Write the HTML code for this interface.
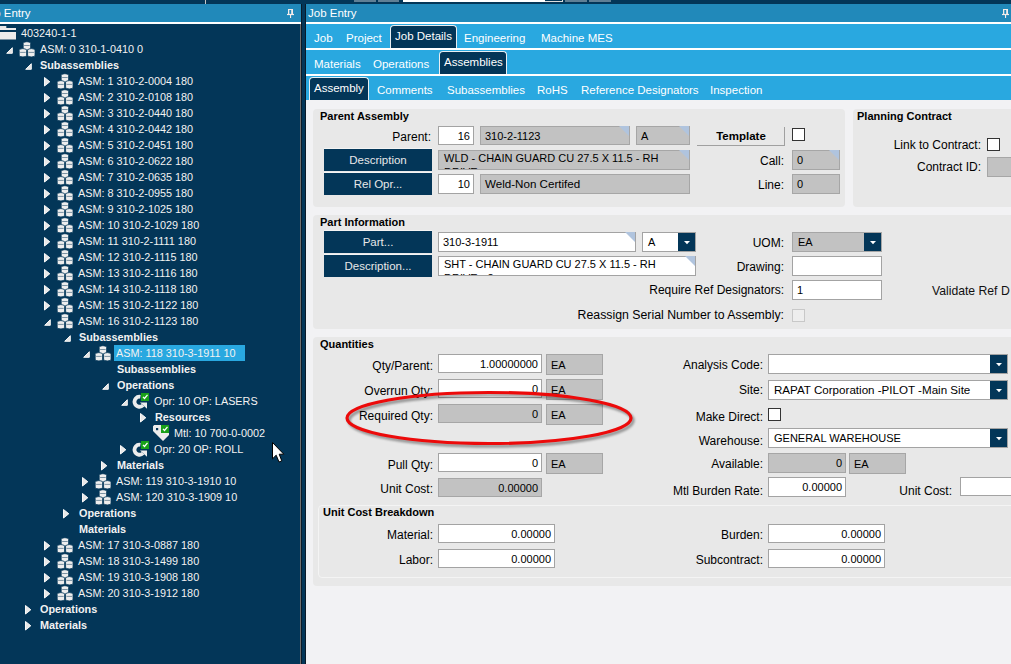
<!DOCTYPE html>
<html><head><meta charset="utf-8"><style>
html,body{margin:0;padding:0;width:1011px;height:664px;overflow:hidden;background:#033658;font-family:"Liberation Sans",sans-serif}
#r{position:relative;width:1011px;height:664px;overflow:hidden}
#r div,#r svg{position:absolute}
.t{white-space:nowrap}
</style></head><body><div id="r">
<div style="left:0px;top:0px;width:1011px;height:4px;background:#033658"></div>
<div style="left:205px;top:0px;width:1px;height:4px;background:#c8c8c8"></div>
<div style="left:354px;top:0px;width:22px;height:2px;background:#5f7f95"></div>
<div style="left:378px;top:0px;width:21px;height:2px;background:#5f7f95"></div>
<div style="left:403px;top:0px;width:142px;height:2px;background:#fff"></div>
<div style="left:545px;top:0px;width:18px;height:2px;background:#033658;border-bottom:1px solid #ddd;border-right:1px solid #ddd;box-sizing:border-box"></div>
<div style="left:565px;top:0px;width:22px;height:2px;background:#5f7f95"></div>
<div style="left:589px;top:0px;width:22px;height:2px;background:#5f7f95"></div>
<div style="left:0px;top:4px;width:301px;height:18px;background:#2189ba"></div>
<div style="left:0px;top:22px;width:301px;height:2px;background:#fff"></div>
<div style="left:0px;top:24px;width:300px;height:640px;background:#033658"></div>
<div style="left:300px;top:24px;width:1px;height:640px;background:#707070"></div>
<div class="t" style="left:-18px;top:4px;font-size:11.5px;line-height:18px;color:#fff;">Job Entry</div>
<svg style="left:287px;top:9px" width="8" height="10" viewBox="0 0 8 10"><path d="M1 0H6V5H4.2V1.1H2.3V5H1Z" fill="#f4ecea"/><rect x="0" y="4.9" width="7" height="1.2" fill="#f4ecea"/><rect x="3" y="6" width="1.1" height="3" fill="#f4ecea"/></svg>
<div style="left:301px;top:0px;width:5px;height:664px;background:#033658"></div>
<div style="left:301px;top:4px;width:1px;height:660px;background:#0a1a28"></div>
<div style="left:305px;top:4px;width:1px;height:660px;background:#0a1a28"></div>
<svg style="left:0px;top:26px" width="17" height="15" viewBox="0 0 17 15"><rect x="0" y="0" width="6.3" height="2" fill="#e6e6e6"/><rect x="0" y="2" width="16" height="2" fill="#ececec"/><rect x="0" y="6" width="16" height="7.5" fill="#ececec"/></svg>
<div class="t" style="left:21px;top:25px;font-size:10.85px;line-height:16px;color:#f2f2f2;">403240-1-1</div>
<svg style="left:6px;top:47px" width="7" height="7" viewBox="0 0 7 7"><path d="M6.3 0.7V6.3H0.7Z" fill="#e4e4e4" stroke="#f4f4f4" stroke-width="1"/></svg>
<svg style="left:19px;top:41px" width="16" height="16" viewBox="0 0 16 16"><path d="M4.2 2.5V7.300000000000001Q4.2 9.0 7.9 9.0Q11.600000000000001 9.0 11.600000000000001 7.300000000000001V2.5Q11.600000000000001 0.7 7.9 0.7Q4.2 0.7 4.2 2.5Z" fill="#eeeeee" stroke="#033658" stroke-width="0.8"/><rect x="5.1000000000000005" y="4.0" width="5.6" height="0.9" fill="#6f889a"/><path d="M0.19999999999999973 9.4V14.2Q0.19999999999999973 15.899999999999999 3.9 15.899999999999999Q7.6 15.899999999999999 7.6 14.2V9.4Q7.6 7.6 3.9 7.6Q0.19999999999999973 7.6 0.19999999999999973 9.4Z" fill="#eeeeee" stroke="#033658" stroke-width="0.8"/><rect x="1.1" y="10.9" width="5.6" height="0.9" fill="#6f889a"/><path d="M8.600000000000001 9.4V14.2Q8.600000000000001 15.899999999999999 12.3 15.899999999999999Q16.0 15.899999999999999 16.0 14.2V9.4Q16.0 7.6 12.3 7.6Q8.600000000000001 7.6 8.600000000000001 9.4Z" fill="#eeeeee" stroke="#033658" stroke-width="0.8"/><rect x="9.5" y="10.9" width="5.6" height="0.9" fill="#6f889a"/></svg>
<div class="t" style="left:40px;top:41px;font-size:10.85px;line-height:16px;color:#f2f2f2;">ASM: 0 310-1-0410 0</div>
<svg style="left:25px;top:63px" width="7" height="7" viewBox="0 0 7 7"><path d="M6.3 0.7V6.3H0.7Z" fill="#e4e4e4" stroke="#f4f4f4" stroke-width="1"/></svg>
<div class="t" style="left:40px;top:57px;font-size:10.85px;line-height:16px;color:#f2f2f2;font-weight:bold;">Subassemblies</div>
<svg style="left:44px;top:77px" width="7" height="10" viewBox="0 0 7 10"><path d="M0.5 0.5L5.8 4.75L0.5 9Z" fill="#e8e8e8" stroke="#f8f8f8" stroke-width="1"/></svg>
<svg style="left:57px;top:73px" width="16" height="16" viewBox="0 0 16 16"><path d="M4.2 2.5V7.300000000000001Q4.2 9.0 7.9 9.0Q11.600000000000001 9.0 11.600000000000001 7.300000000000001V2.5Q11.600000000000001 0.7 7.9 0.7Q4.2 0.7 4.2 2.5Z" fill="#eeeeee" stroke="#033658" stroke-width="0.8"/><rect x="5.1000000000000005" y="4.0" width="5.6" height="0.9" fill="#6f889a"/><path d="M0.19999999999999973 9.4V14.2Q0.19999999999999973 15.899999999999999 3.9 15.899999999999999Q7.6 15.899999999999999 7.6 14.2V9.4Q7.6 7.6 3.9 7.6Q0.19999999999999973 7.6 0.19999999999999973 9.4Z" fill="#eeeeee" stroke="#033658" stroke-width="0.8"/><rect x="1.1" y="10.9" width="5.6" height="0.9" fill="#6f889a"/><path d="M8.600000000000001 9.4V14.2Q8.600000000000001 15.899999999999999 12.3 15.899999999999999Q16.0 15.899999999999999 16.0 14.2V9.4Q16.0 7.6 12.3 7.6Q8.600000000000001 7.6 8.600000000000001 9.4Z" fill="#eeeeee" stroke="#033658" stroke-width="0.8"/><rect x="9.5" y="10.9" width="5.6" height="0.9" fill="#6f889a"/></svg>
<div class="t" style="left:78px;top:73px;font-size:10.85px;line-height:16px;color:#f2f2f2;">ASM: 1 310-2-0004 180</div>
<svg style="left:44px;top:93px" width="7" height="10" viewBox="0 0 7 10"><path d="M0.5 0.5L5.8 4.75L0.5 9Z" fill="#e8e8e8" stroke="#f8f8f8" stroke-width="1"/></svg>
<svg style="left:57px;top:89px" width="16" height="16" viewBox="0 0 16 16"><path d="M4.2 2.5V7.300000000000001Q4.2 9.0 7.9 9.0Q11.600000000000001 9.0 11.600000000000001 7.300000000000001V2.5Q11.600000000000001 0.7 7.9 0.7Q4.2 0.7 4.2 2.5Z" fill="#eeeeee" stroke="#033658" stroke-width="0.8"/><rect x="5.1000000000000005" y="4.0" width="5.6" height="0.9" fill="#6f889a"/><path d="M0.19999999999999973 9.4V14.2Q0.19999999999999973 15.899999999999999 3.9 15.899999999999999Q7.6 15.899999999999999 7.6 14.2V9.4Q7.6 7.6 3.9 7.6Q0.19999999999999973 7.6 0.19999999999999973 9.4Z" fill="#eeeeee" stroke="#033658" stroke-width="0.8"/><rect x="1.1" y="10.9" width="5.6" height="0.9" fill="#6f889a"/><path d="M8.600000000000001 9.4V14.2Q8.600000000000001 15.899999999999999 12.3 15.899999999999999Q16.0 15.899999999999999 16.0 14.2V9.4Q16.0 7.6 12.3 7.6Q8.600000000000001 7.6 8.600000000000001 9.4Z" fill="#eeeeee" stroke="#033658" stroke-width="0.8"/><rect x="9.5" y="10.9" width="5.6" height="0.9" fill="#6f889a"/></svg>
<div class="t" style="left:78px;top:89px;font-size:10.85px;line-height:16px;color:#f2f2f2;">ASM: 2 310-2-0108 180</div>
<svg style="left:44px;top:109px" width="7" height="10" viewBox="0 0 7 10"><path d="M0.5 0.5L5.8 4.75L0.5 9Z" fill="#e8e8e8" stroke="#f8f8f8" stroke-width="1"/></svg>
<svg style="left:57px;top:105px" width="16" height="16" viewBox="0 0 16 16"><path d="M4.2 2.5V7.300000000000001Q4.2 9.0 7.9 9.0Q11.600000000000001 9.0 11.600000000000001 7.300000000000001V2.5Q11.600000000000001 0.7 7.9 0.7Q4.2 0.7 4.2 2.5Z" fill="#eeeeee" stroke="#033658" stroke-width="0.8"/><rect x="5.1000000000000005" y="4.0" width="5.6" height="0.9" fill="#6f889a"/><path d="M0.19999999999999973 9.4V14.2Q0.19999999999999973 15.899999999999999 3.9 15.899999999999999Q7.6 15.899999999999999 7.6 14.2V9.4Q7.6 7.6 3.9 7.6Q0.19999999999999973 7.6 0.19999999999999973 9.4Z" fill="#eeeeee" stroke="#033658" stroke-width="0.8"/><rect x="1.1" y="10.9" width="5.6" height="0.9" fill="#6f889a"/><path d="M8.600000000000001 9.4V14.2Q8.600000000000001 15.899999999999999 12.3 15.899999999999999Q16.0 15.899999999999999 16.0 14.2V9.4Q16.0 7.6 12.3 7.6Q8.600000000000001 7.6 8.600000000000001 9.4Z" fill="#eeeeee" stroke="#033658" stroke-width="0.8"/><rect x="9.5" y="10.9" width="5.6" height="0.9" fill="#6f889a"/></svg>
<div class="t" style="left:78px;top:105px;font-size:10.85px;line-height:16px;color:#f2f2f2;">ASM: 3 310-2-0440 180</div>
<svg style="left:44px;top:125px" width="7" height="10" viewBox="0 0 7 10"><path d="M0.5 0.5L5.8 4.75L0.5 9Z" fill="#e8e8e8" stroke="#f8f8f8" stroke-width="1"/></svg>
<svg style="left:57px;top:121px" width="16" height="16" viewBox="0 0 16 16"><path d="M4.2 2.5V7.300000000000001Q4.2 9.0 7.9 9.0Q11.600000000000001 9.0 11.600000000000001 7.300000000000001V2.5Q11.600000000000001 0.7 7.9 0.7Q4.2 0.7 4.2 2.5Z" fill="#eeeeee" stroke="#033658" stroke-width="0.8"/><rect x="5.1000000000000005" y="4.0" width="5.6" height="0.9" fill="#6f889a"/><path d="M0.19999999999999973 9.4V14.2Q0.19999999999999973 15.899999999999999 3.9 15.899999999999999Q7.6 15.899999999999999 7.6 14.2V9.4Q7.6 7.6 3.9 7.6Q0.19999999999999973 7.6 0.19999999999999973 9.4Z" fill="#eeeeee" stroke="#033658" stroke-width="0.8"/><rect x="1.1" y="10.9" width="5.6" height="0.9" fill="#6f889a"/><path d="M8.600000000000001 9.4V14.2Q8.600000000000001 15.899999999999999 12.3 15.899999999999999Q16.0 15.899999999999999 16.0 14.2V9.4Q16.0 7.6 12.3 7.6Q8.600000000000001 7.6 8.600000000000001 9.4Z" fill="#eeeeee" stroke="#033658" stroke-width="0.8"/><rect x="9.5" y="10.9" width="5.6" height="0.9" fill="#6f889a"/></svg>
<div class="t" style="left:78px;top:121px;font-size:10.85px;line-height:16px;color:#f2f2f2;">ASM: 4 310-2-0442 180</div>
<svg style="left:44px;top:141px" width="7" height="10" viewBox="0 0 7 10"><path d="M0.5 0.5L5.8 4.75L0.5 9Z" fill="#e8e8e8" stroke="#f8f8f8" stroke-width="1"/></svg>
<svg style="left:57px;top:137px" width="16" height="16" viewBox="0 0 16 16"><path d="M4.2 2.5V7.300000000000001Q4.2 9.0 7.9 9.0Q11.600000000000001 9.0 11.600000000000001 7.300000000000001V2.5Q11.600000000000001 0.7 7.9 0.7Q4.2 0.7 4.2 2.5Z" fill="#eeeeee" stroke="#033658" stroke-width="0.8"/><rect x="5.1000000000000005" y="4.0" width="5.6" height="0.9" fill="#6f889a"/><path d="M0.19999999999999973 9.4V14.2Q0.19999999999999973 15.899999999999999 3.9 15.899999999999999Q7.6 15.899999999999999 7.6 14.2V9.4Q7.6 7.6 3.9 7.6Q0.19999999999999973 7.6 0.19999999999999973 9.4Z" fill="#eeeeee" stroke="#033658" stroke-width="0.8"/><rect x="1.1" y="10.9" width="5.6" height="0.9" fill="#6f889a"/><path d="M8.600000000000001 9.4V14.2Q8.600000000000001 15.899999999999999 12.3 15.899999999999999Q16.0 15.899999999999999 16.0 14.2V9.4Q16.0 7.6 12.3 7.6Q8.600000000000001 7.6 8.600000000000001 9.4Z" fill="#eeeeee" stroke="#033658" stroke-width="0.8"/><rect x="9.5" y="10.9" width="5.6" height="0.9" fill="#6f889a"/></svg>
<div class="t" style="left:78px;top:137px;font-size:10.85px;line-height:16px;color:#f2f2f2;">ASM: 5 310-2-0451 180</div>
<svg style="left:44px;top:157px" width="7" height="10" viewBox="0 0 7 10"><path d="M0.5 0.5L5.8 4.75L0.5 9Z" fill="#e8e8e8" stroke="#f8f8f8" stroke-width="1"/></svg>
<svg style="left:57px;top:153px" width="16" height="16" viewBox="0 0 16 16"><path d="M4.2 2.5V7.300000000000001Q4.2 9.0 7.9 9.0Q11.600000000000001 9.0 11.600000000000001 7.300000000000001V2.5Q11.600000000000001 0.7 7.9 0.7Q4.2 0.7 4.2 2.5Z" fill="#eeeeee" stroke="#033658" stroke-width="0.8"/><rect x="5.1000000000000005" y="4.0" width="5.6" height="0.9" fill="#6f889a"/><path d="M0.19999999999999973 9.4V14.2Q0.19999999999999973 15.899999999999999 3.9 15.899999999999999Q7.6 15.899999999999999 7.6 14.2V9.4Q7.6 7.6 3.9 7.6Q0.19999999999999973 7.6 0.19999999999999973 9.4Z" fill="#eeeeee" stroke="#033658" stroke-width="0.8"/><rect x="1.1" y="10.9" width="5.6" height="0.9" fill="#6f889a"/><path d="M8.600000000000001 9.4V14.2Q8.600000000000001 15.899999999999999 12.3 15.899999999999999Q16.0 15.899999999999999 16.0 14.2V9.4Q16.0 7.6 12.3 7.6Q8.600000000000001 7.6 8.600000000000001 9.4Z" fill="#eeeeee" stroke="#033658" stroke-width="0.8"/><rect x="9.5" y="10.9" width="5.6" height="0.9" fill="#6f889a"/></svg>
<div class="t" style="left:78px;top:153px;font-size:10.85px;line-height:16px;color:#f2f2f2;">ASM: 6 310-2-0622 180</div>
<svg style="left:44px;top:173px" width="7" height="10" viewBox="0 0 7 10"><path d="M0.5 0.5L5.8 4.75L0.5 9Z" fill="#e8e8e8" stroke="#f8f8f8" stroke-width="1"/></svg>
<svg style="left:57px;top:169px" width="16" height="16" viewBox="0 0 16 16"><path d="M4.2 2.5V7.300000000000001Q4.2 9.0 7.9 9.0Q11.600000000000001 9.0 11.600000000000001 7.300000000000001V2.5Q11.600000000000001 0.7 7.9 0.7Q4.2 0.7 4.2 2.5Z" fill="#eeeeee" stroke="#033658" stroke-width="0.8"/><rect x="5.1000000000000005" y="4.0" width="5.6" height="0.9" fill="#6f889a"/><path d="M0.19999999999999973 9.4V14.2Q0.19999999999999973 15.899999999999999 3.9 15.899999999999999Q7.6 15.899999999999999 7.6 14.2V9.4Q7.6 7.6 3.9 7.6Q0.19999999999999973 7.6 0.19999999999999973 9.4Z" fill="#eeeeee" stroke="#033658" stroke-width="0.8"/><rect x="1.1" y="10.9" width="5.6" height="0.9" fill="#6f889a"/><path d="M8.600000000000001 9.4V14.2Q8.600000000000001 15.899999999999999 12.3 15.899999999999999Q16.0 15.899999999999999 16.0 14.2V9.4Q16.0 7.6 12.3 7.6Q8.600000000000001 7.6 8.600000000000001 9.4Z" fill="#eeeeee" stroke="#033658" stroke-width="0.8"/><rect x="9.5" y="10.9" width="5.6" height="0.9" fill="#6f889a"/></svg>
<div class="t" style="left:78px;top:169px;font-size:10.85px;line-height:16px;color:#f2f2f2;">ASM: 7 310-2-0635 180</div>
<svg style="left:44px;top:189px" width="7" height="10" viewBox="0 0 7 10"><path d="M0.5 0.5L5.8 4.75L0.5 9Z" fill="#e8e8e8" stroke="#f8f8f8" stroke-width="1"/></svg>
<svg style="left:57px;top:185px" width="16" height="16" viewBox="0 0 16 16"><path d="M4.2 2.5V7.300000000000001Q4.2 9.0 7.9 9.0Q11.600000000000001 9.0 11.600000000000001 7.300000000000001V2.5Q11.600000000000001 0.7 7.9 0.7Q4.2 0.7 4.2 2.5Z" fill="#eeeeee" stroke="#033658" stroke-width="0.8"/><rect x="5.1000000000000005" y="4.0" width="5.6" height="0.9" fill="#6f889a"/><path d="M0.19999999999999973 9.4V14.2Q0.19999999999999973 15.899999999999999 3.9 15.899999999999999Q7.6 15.899999999999999 7.6 14.2V9.4Q7.6 7.6 3.9 7.6Q0.19999999999999973 7.6 0.19999999999999973 9.4Z" fill="#eeeeee" stroke="#033658" stroke-width="0.8"/><rect x="1.1" y="10.9" width="5.6" height="0.9" fill="#6f889a"/><path d="M8.600000000000001 9.4V14.2Q8.600000000000001 15.899999999999999 12.3 15.899999999999999Q16.0 15.899999999999999 16.0 14.2V9.4Q16.0 7.6 12.3 7.6Q8.600000000000001 7.6 8.600000000000001 9.4Z" fill="#eeeeee" stroke="#033658" stroke-width="0.8"/><rect x="9.5" y="10.9" width="5.6" height="0.9" fill="#6f889a"/></svg>
<div class="t" style="left:78px;top:185px;font-size:10.85px;line-height:16px;color:#f2f2f2;">ASM: 8 310-2-0955 180</div>
<svg style="left:44px;top:205px" width="7" height="10" viewBox="0 0 7 10"><path d="M0.5 0.5L5.8 4.75L0.5 9Z" fill="#e8e8e8" stroke="#f8f8f8" stroke-width="1"/></svg>
<svg style="left:57px;top:201px" width="16" height="16" viewBox="0 0 16 16"><path d="M4.2 2.5V7.300000000000001Q4.2 9.0 7.9 9.0Q11.600000000000001 9.0 11.600000000000001 7.300000000000001V2.5Q11.600000000000001 0.7 7.9 0.7Q4.2 0.7 4.2 2.5Z" fill="#eeeeee" stroke="#033658" stroke-width="0.8"/><rect x="5.1000000000000005" y="4.0" width="5.6" height="0.9" fill="#6f889a"/><path d="M0.19999999999999973 9.4V14.2Q0.19999999999999973 15.899999999999999 3.9 15.899999999999999Q7.6 15.899999999999999 7.6 14.2V9.4Q7.6 7.6 3.9 7.6Q0.19999999999999973 7.6 0.19999999999999973 9.4Z" fill="#eeeeee" stroke="#033658" stroke-width="0.8"/><rect x="1.1" y="10.9" width="5.6" height="0.9" fill="#6f889a"/><path d="M8.600000000000001 9.4V14.2Q8.600000000000001 15.899999999999999 12.3 15.899999999999999Q16.0 15.899999999999999 16.0 14.2V9.4Q16.0 7.6 12.3 7.6Q8.600000000000001 7.6 8.600000000000001 9.4Z" fill="#eeeeee" stroke="#033658" stroke-width="0.8"/><rect x="9.5" y="10.9" width="5.6" height="0.9" fill="#6f889a"/></svg>
<div class="t" style="left:78px;top:201px;font-size:10.85px;line-height:16px;color:#f2f2f2;">ASM: 9 310-2-1025 180</div>
<svg style="left:44px;top:221px" width="7" height="10" viewBox="0 0 7 10"><path d="M0.5 0.5L5.8 4.75L0.5 9Z" fill="#e8e8e8" stroke="#f8f8f8" stroke-width="1"/></svg>
<svg style="left:57px;top:217px" width="16" height="16" viewBox="0 0 16 16"><path d="M4.2 2.5V7.300000000000001Q4.2 9.0 7.9 9.0Q11.600000000000001 9.0 11.600000000000001 7.300000000000001V2.5Q11.600000000000001 0.7 7.9 0.7Q4.2 0.7 4.2 2.5Z" fill="#eeeeee" stroke="#033658" stroke-width="0.8"/><rect x="5.1000000000000005" y="4.0" width="5.6" height="0.9" fill="#6f889a"/><path d="M0.19999999999999973 9.4V14.2Q0.19999999999999973 15.899999999999999 3.9 15.899999999999999Q7.6 15.899999999999999 7.6 14.2V9.4Q7.6 7.6 3.9 7.6Q0.19999999999999973 7.6 0.19999999999999973 9.4Z" fill="#eeeeee" stroke="#033658" stroke-width="0.8"/><rect x="1.1" y="10.9" width="5.6" height="0.9" fill="#6f889a"/><path d="M8.600000000000001 9.4V14.2Q8.600000000000001 15.899999999999999 12.3 15.899999999999999Q16.0 15.899999999999999 16.0 14.2V9.4Q16.0 7.6 12.3 7.6Q8.600000000000001 7.6 8.600000000000001 9.4Z" fill="#eeeeee" stroke="#033658" stroke-width="0.8"/><rect x="9.5" y="10.9" width="5.6" height="0.9" fill="#6f889a"/></svg>
<div class="t" style="left:78px;top:217px;font-size:10.85px;line-height:16px;color:#f2f2f2;">ASM: 10 310-2-1029 180</div>
<svg style="left:44px;top:237px" width="7" height="10" viewBox="0 0 7 10"><path d="M0.5 0.5L5.8 4.75L0.5 9Z" fill="#e8e8e8" stroke="#f8f8f8" stroke-width="1"/></svg>
<svg style="left:57px;top:233px" width="16" height="16" viewBox="0 0 16 16"><path d="M4.2 2.5V7.300000000000001Q4.2 9.0 7.9 9.0Q11.600000000000001 9.0 11.600000000000001 7.300000000000001V2.5Q11.600000000000001 0.7 7.9 0.7Q4.2 0.7 4.2 2.5Z" fill="#eeeeee" stroke="#033658" stroke-width="0.8"/><rect x="5.1000000000000005" y="4.0" width="5.6" height="0.9" fill="#6f889a"/><path d="M0.19999999999999973 9.4V14.2Q0.19999999999999973 15.899999999999999 3.9 15.899999999999999Q7.6 15.899999999999999 7.6 14.2V9.4Q7.6 7.6 3.9 7.6Q0.19999999999999973 7.6 0.19999999999999973 9.4Z" fill="#eeeeee" stroke="#033658" stroke-width="0.8"/><rect x="1.1" y="10.9" width="5.6" height="0.9" fill="#6f889a"/><path d="M8.600000000000001 9.4V14.2Q8.600000000000001 15.899999999999999 12.3 15.899999999999999Q16.0 15.899999999999999 16.0 14.2V9.4Q16.0 7.6 12.3 7.6Q8.600000000000001 7.6 8.600000000000001 9.4Z" fill="#eeeeee" stroke="#033658" stroke-width="0.8"/><rect x="9.5" y="10.9" width="5.6" height="0.9" fill="#6f889a"/></svg>
<div class="t" style="left:78px;top:233px;font-size:10.85px;line-height:16px;color:#f2f2f2;">ASM: 11 310-2-1111 180</div>
<svg style="left:44px;top:253px" width="7" height="10" viewBox="0 0 7 10"><path d="M0.5 0.5L5.8 4.75L0.5 9Z" fill="#e8e8e8" stroke="#f8f8f8" stroke-width="1"/></svg>
<svg style="left:57px;top:249px" width="16" height="16" viewBox="0 0 16 16"><path d="M4.2 2.5V7.300000000000001Q4.2 9.0 7.9 9.0Q11.600000000000001 9.0 11.600000000000001 7.300000000000001V2.5Q11.600000000000001 0.7 7.9 0.7Q4.2 0.7 4.2 2.5Z" fill="#eeeeee" stroke="#033658" stroke-width="0.8"/><rect x="5.1000000000000005" y="4.0" width="5.6" height="0.9" fill="#6f889a"/><path d="M0.19999999999999973 9.4V14.2Q0.19999999999999973 15.899999999999999 3.9 15.899999999999999Q7.6 15.899999999999999 7.6 14.2V9.4Q7.6 7.6 3.9 7.6Q0.19999999999999973 7.6 0.19999999999999973 9.4Z" fill="#eeeeee" stroke="#033658" stroke-width="0.8"/><rect x="1.1" y="10.9" width="5.6" height="0.9" fill="#6f889a"/><path d="M8.600000000000001 9.4V14.2Q8.600000000000001 15.899999999999999 12.3 15.899999999999999Q16.0 15.899999999999999 16.0 14.2V9.4Q16.0 7.6 12.3 7.6Q8.600000000000001 7.6 8.600000000000001 9.4Z" fill="#eeeeee" stroke="#033658" stroke-width="0.8"/><rect x="9.5" y="10.9" width="5.6" height="0.9" fill="#6f889a"/></svg>
<div class="t" style="left:78px;top:249px;font-size:10.85px;line-height:16px;color:#f2f2f2;">ASM: 12 310-2-1115 180</div>
<svg style="left:44px;top:269px" width="7" height="10" viewBox="0 0 7 10"><path d="M0.5 0.5L5.8 4.75L0.5 9Z" fill="#e8e8e8" stroke="#f8f8f8" stroke-width="1"/></svg>
<svg style="left:57px;top:265px" width="16" height="16" viewBox="0 0 16 16"><path d="M4.2 2.5V7.300000000000001Q4.2 9.0 7.9 9.0Q11.600000000000001 9.0 11.600000000000001 7.300000000000001V2.5Q11.600000000000001 0.7 7.9 0.7Q4.2 0.7 4.2 2.5Z" fill="#eeeeee" stroke="#033658" stroke-width="0.8"/><rect x="5.1000000000000005" y="4.0" width="5.6" height="0.9" fill="#6f889a"/><path d="M0.19999999999999973 9.4V14.2Q0.19999999999999973 15.899999999999999 3.9 15.899999999999999Q7.6 15.899999999999999 7.6 14.2V9.4Q7.6 7.6 3.9 7.6Q0.19999999999999973 7.6 0.19999999999999973 9.4Z" fill="#eeeeee" stroke="#033658" stroke-width="0.8"/><rect x="1.1" y="10.9" width="5.6" height="0.9" fill="#6f889a"/><path d="M8.600000000000001 9.4V14.2Q8.600000000000001 15.899999999999999 12.3 15.899999999999999Q16.0 15.899999999999999 16.0 14.2V9.4Q16.0 7.6 12.3 7.6Q8.600000000000001 7.6 8.600000000000001 9.4Z" fill="#eeeeee" stroke="#033658" stroke-width="0.8"/><rect x="9.5" y="10.9" width="5.6" height="0.9" fill="#6f889a"/></svg>
<div class="t" style="left:78px;top:265px;font-size:10.85px;line-height:16px;color:#f2f2f2;">ASM: 13 310-2-1116 180</div>
<svg style="left:44px;top:285px" width="7" height="10" viewBox="0 0 7 10"><path d="M0.5 0.5L5.8 4.75L0.5 9Z" fill="#e8e8e8" stroke="#f8f8f8" stroke-width="1"/></svg>
<svg style="left:57px;top:281px" width="16" height="16" viewBox="0 0 16 16"><path d="M4.2 2.5V7.300000000000001Q4.2 9.0 7.9 9.0Q11.600000000000001 9.0 11.600000000000001 7.300000000000001V2.5Q11.600000000000001 0.7 7.9 0.7Q4.2 0.7 4.2 2.5Z" fill="#eeeeee" stroke="#033658" stroke-width="0.8"/><rect x="5.1000000000000005" y="4.0" width="5.6" height="0.9" fill="#6f889a"/><path d="M0.19999999999999973 9.4V14.2Q0.19999999999999973 15.899999999999999 3.9 15.899999999999999Q7.6 15.899999999999999 7.6 14.2V9.4Q7.6 7.6 3.9 7.6Q0.19999999999999973 7.6 0.19999999999999973 9.4Z" fill="#eeeeee" stroke="#033658" stroke-width="0.8"/><rect x="1.1" y="10.9" width="5.6" height="0.9" fill="#6f889a"/><path d="M8.600000000000001 9.4V14.2Q8.600000000000001 15.899999999999999 12.3 15.899999999999999Q16.0 15.899999999999999 16.0 14.2V9.4Q16.0 7.6 12.3 7.6Q8.600000000000001 7.6 8.600000000000001 9.4Z" fill="#eeeeee" stroke="#033658" stroke-width="0.8"/><rect x="9.5" y="10.9" width="5.6" height="0.9" fill="#6f889a"/></svg>
<div class="t" style="left:78px;top:281px;font-size:10.85px;line-height:16px;color:#f2f2f2;">ASM: 14 310-2-1118 180</div>
<svg style="left:44px;top:301px" width="7" height="10" viewBox="0 0 7 10"><path d="M0.5 0.5L5.8 4.75L0.5 9Z" fill="#e8e8e8" stroke="#f8f8f8" stroke-width="1"/></svg>
<svg style="left:57px;top:297px" width="16" height="16" viewBox="0 0 16 16"><path d="M4.2 2.5V7.300000000000001Q4.2 9.0 7.9 9.0Q11.600000000000001 9.0 11.600000000000001 7.300000000000001V2.5Q11.600000000000001 0.7 7.9 0.7Q4.2 0.7 4.2 2.5Z" fill="#eeeeee" stroke="#033658" stroke-width="0.8"/><rect x="5.1000000000000005" y="4.0" width="5.6" height="0.9" fill="#6f889a"/><path d="M0.19999999999999973 9.4V14.2Q0.19999999999999973 15.899999999999999 3.9 15.899999999999999Q7.6 15.899999999999999 7.6 14.2V9.4Q7.6 7.6 3.9 7.6Q0.19999999999999973 7.6 0.19999999999999973 9.4Z" fill="#eeeeee" stroke="#033658" stroke-width="0.8"/><rect x="1.1" y="10.9" width="5.6" height="0.9" fill="#6f889a"/><path d="M8.600000000000001 9.4V14.2Q8.600000000000001 15.899999999999999 12.3 15.899999999999999Q16.0 15.899999999999999 16.0 14.2V9.4Q16.0 7.6 12.3 7.6Q8.600000000000001 7.6 8.600000000000001 9.4Z" fill="#eeeeee" stroke="#033658" stroke-width="0.8"/><rect x="9.5" y="10.9" width="5.6" height="0.9" fill="#6f889a"/></svg>
<div class="t" style="left:78px;top:297px;font-size:10.85px;line-height:16px;color:#f2f2f2;">ASM: 15 310-2-1122 180</div>
<svg style="left:44px;top:319px" width="7" height="7" viewBox="0 0 7 7"><path d="M6.3 0.7V6.3H0.7Z" fill="#e4e4e4" stroke="#f4f4f4" stroke-width="1"/></svg>
<svg style="left:57px;top:313px" width="16" height="16" viewBox="0 0 16 16"><path d="M4.2 2.5V7.300000000000001Q4.2 9.0 7.9 9.0Q11.600000000000001 9.0 11.600000000000001 7.300000000000001V2.5Q11.600000000000001 0.7 7.9 0.7Q4.2 0.7 4.2 2.5Z" fill="#eeeeee" stroke="#033658" stroke-width="0.8"/><rect x="5.1000000000000005" y="4.0" width="5.6" height="0.9" fill="#6f889a"/><path d="M0.19999999999999973 9.4V14.2Q0.19999999999999973 15.899999999999999 3.9 15.899999999999999Q7.6 15.899999999999999 7.6 14.2V9.4Q7.6 7.6 3.9 7.6Q0.19999999999999973 7.6 0.19999999999999973 9.4Z" fill="#eeeeee" stroke="#033658" stroke-width="0.8"/><rect x="1.1" y="10.9" width="5.6" height="0.9" fill="#6f889a"/><path d="M8.600000000000001 9.4V14.2Q8.600000000000001 15.899999999999999 12.3 15.899999999999999Q16.0 15.899999999999999 16.0 14.2V9.4Q16.0 7.6 12.3 7.6Q8.600000000000001 7.6 8.600000000000001 9.4Z" fill="#eeeeee" stroke="#033658" stroke-width="0.8"/><rect x="9.5" y="10.9" width="5.6" height="0.9" fill="#6f889a"/></svg>
<div class="t" style="left:78px;top:313px;font-size:10.85px;line-height:16px;color:#f2f2f2;">ASM: 16 310-2-1123 180</div>
<svg style="left:64px;top:335px" width="7" height="7" viewBox="0 0 7 7"><path d="M6.3 0.7V6.3H0.7Z" fill="#e4e4e4" stroke="#f4f4f4" stroke-width="1"/></svg>
<div class="t" style="left:79px;top:329px;font-size:10.85px;line-height:16px;color:#f2f2f2;font-weight:bold;">Subassemblies</div>
<svg style="left:83px;top:351px" width="7" height="7" viewBox="0 0 7 7"><path d="M6.3 0.7V6.3H0.7Z" fill="#e4e4e4" stroke="#f4f4f4" stroke-width="1"/></svg>
<svg style="left:95px;top:345px" width="16" height="16" viewBox="0 0 16 16"><path d="M4.2 2.5V7.300000000000001Q4.2 9.0 7.9 9.0Q11.600000000000001 9.0 11.600000000000001 7.300000000000001V2.5Q11.600000000000001 0.7 7.9 0.7Q4.2 0.7 4.2 2.5Z" fill="#eeeeee" stroke="#033658" stroke-width="0.8"/><rect x="5.1000000000000005" y="4.0" width="5.6" height="0.9" fill="#6f889a"/><path d="M0.19999999999999973 9.4V14.2Q0.19999999999999973 15.899999999999999 3.9 15.899999999999999Q7.6 15.899999999999999 7.6 14.2V9.4Q7.6 7.6 3.9 7.6Q0.19999999999999973 7.6 0.19999999999999973 9.4Z" fill="#eeeeee" stroke="#033658" stroke-width="0.8"/><rect x="1.1" y="10.9" width="5.6" height="0.9" fill="#6f889a"/><path d="M8.600000000000001 9.4V14.2Q8.600000000000001 15.899999999999999 12.3 15.899999999999999Q16.0 15.899999999999999 16.0 14.2V9.4Q16.0 7.6 12.3 7.6Q8.600000000000001 7.6 8.600000000000001 9.4Z" fill="#eeeeee" stroke="#033658" stroke-width="0.8"/><rect x="9.5" y="10.9" width="5.6" height="0.9" fill="#6f889a"/></svg>
<div style="left:114px;top:345px;width:131px;height:16px;background:#29a8e0"></div>
<div class="t" style="left:116px;top:345px;font-size:10.85px;line-height:16px;color:#f2f2f2;">ASM: 118 310-3-1911 10</div>
<div class="t" style="left:117px;top:361px;font-size:10.85px;line-height:16px;color:#f2f2f2;font-weight:bold;">Subassemblies</div>
<svg style="left:102px;top:383px" width="7" height="7" viewBox="0 0 7 7"><path d="M6.3 0.7V6.3H0.7Z" fill="#e4e4e4" stroke="#f4f4f4" stroke-width="1"/></svg>
<div class="t" style="left:117px;top:377px;font-size:10.85px;line-height:16px;color:#f2f2f2;font-weight:bold;">Operations</div>
<svg style="left:121px;top:399px" width="7" height="7" viewBox="0 0 7 7"><path d="M6.3 0.7V6.3H0.7Z" fill="#e4e4e4" stroke="#f4f4f4" stroke-width="1"/></svg>
<svg style="left:132px;top:393px" width="17" height="17" viewBox="0 0 17 17"><path d="M8.37 3.78A5 5 0 1 0 11.04 12.24" fill="none" stroke="#ececec" stroke-width="3.8"/><path d="M8 9.4H15V15.7Z" fill="#ececec"/><rect x="9" y="0" width="8" height="8" fill="#18a018"/><path d="M11 3.9l1.5 1.6 3-3.6" fill="none" stroke="#fff" stroke-width="1.3"/></svg>
<div class="t" style="left:154px;top:393px;font-size:10.85px;line-height:16px;color:#f2f2f2;">Opr: 10 OP: LASERS</div>
<svg style="left:140px;top:413px" width="7" height="10" viewBox="0 0 7 10"><path d="M0.5 0.5L5.8 4.75L0.5 9Z" fill="#e8e8e8" stroke="#f8f8f8" stroke-width="1"/></svg>
<div class="t" style="left:155px;top:409px;font-size:10.85px;line-height:16px;color:#f2f2f2;font-weight:bold;">Resources</div>
<svg style="left:153px;top:425px" width="17" height="17" viewBox="0 0 17 17"><path d="M1.2 0H8V8H16V10L10 16L0 6V1.2Z" fill="#ececec"/><rect x="3" y="3" width="2.2" height="2.2" fill="#033658"/><rect x="8" y="0" width="8" height="8" fill="#18a018"/><path d="M10 3.9l1.5 1.6 3-3.6" fill="none" stroke="#fff" stroke-width="1.3"/></svg>
<div class="t" style="left:174px;top:425px;font-size:10.85px;line-height:16px;color:#f2f2f2;">Mtl: 10 700-0-0002</div>
<svg style="left:120px;top:445px" width="7" height="10" viewBox="0 0 7 10"><path d="M0.5 0.5L5.8 4.75L0.5 9Z" fill="#e8e8e8" stroke="#f8f8f8" stroke-width="1"/></svg>
<svg style="left:132px;top:441px" width="17" height="17" viewBox="0 0 17 17"><path d="M8.37 3.78A5 5 0 1 0 11.04 12.24" fill="none" stroke="#ececec" stroke-width="3.8"/><path d="M8 9.4H15V15.7Z" fill="#ececec"/><rect x="9" y="0" width="8" height="8" fill="#18a018"/><path d="M11 3.9l1.5 1.6 3-3.6" fill="none" stroke="#fff" stroke-width="1.3"/></svg>
<div class="t" style="left:154px;top:441px;font-size:10.85px;line-height:16px;color:#f2f2f2;">Opr: 20 OP: ROLL</div>
<svg style="left:101px;top:461px" width="7" height="10" viewBox="0 0 7 10"><path d="M0.5 0.5L5.8 4.75L0.5 9Z" fill="#e8e8e8" stroke="#f8f8f8" stroke-width="1"/></svg>
<div class="t" style="left:117px;top:457px;font-size:10.85px;line-height:16px;color:#f2f2f2;font-weight:bold;">Materials</div>
<svg style="left:82px;top:477px" width="7" height="10" viewBox="0 0 7 10"><path d="M0.5 0.5L5.8 4.75L0.5 9Z" fill="#e8e8e8" stroke="#f8f8f8" stroke-width="1"/></svg>
<svg style="left:95px;top:473px" width="16" height="16" viewBox="0 0 16 16"><path d="M4.2 2.5V7.300000000000001Q4.2 9.0 7.9 9.0Q11.600000000000001 9.0 11.600000000000001 7.300000000000001V2.5Q11.600000000000001 0.7 7.9 0.7Q4.2 0.7 4.2 2.5Z" fill="#eeeeee" stroke="#033658" stroke-width="0.8"/><rect x="5.1000000000000005" y="4.0" width="5.6" height="0.9" fill="#6f889a"/><path d="M0.19999999999999973 9.4V14.2Q0.19999999999999973 15.899999999999999 3.9 15.899999999999999Q7.6 15.899999999999999 7.6 14.2V9.4Q7.6 7.6 3.9 7.6Q0.19999999999999973 7.6 0.19999999999999973 9.4Z" fill="#eeeeee" stroke="#033658" stroke-width="0.8"/><rect x="1.1" y="10.9" width="5.6" height="0.9" fill="#6f889a"/><path d="M8.600000000000001 9.4V14.2Q8.600000000000001 15.899999999999999 12.3 15.899999999999999Q16.0 15.899999999999999 16.0 14.2V9.4Q16.0 7.6 12.3 7.6Q8.600000000000001 7.6 8.600000000000001 9.4Z" fill="#eeeeee" stroke="#033658" stroke-width="0.8"/><rect x="9.5" y="10.9" width="5.6" height="0.9" fill="#6f889a"/></svg>
<div class="t" style="left:116px;top:473px;font-size:10.85px;line-height:16px;color:#f2f2f2;">ASM: 119 310-3-1910 10</div>
<svg style="left:82px;top:493px" width="7" height="10" viewBox="0 0 7 10"><path d="M0.5 0.5L5.8 4.75L0.5 9Z" fill="#e8e8e8" stroke="#f8f8f8" stroke-width="1"/></svg>
<svg style="left:95px;top:489px" width="16" height="16" viewBox="0 0 16 16"><path d="M4.2 2.5V7.300000000000001Q4.2 9.0 7.9 9.0Q11.600000000000001 9.0 11.600000000000001 7.300000000000001V2.5Q11.600000000000001 0.7 7.9 0.7Q4.2 0.7 4.2 2.5Z" fill="#eeeeee" stroke="#033658" stroke-width="0.8"/><rect x="5.1000000000000005" y="4.0" width="5.6" height="0.9" fill="#6f889a"/><path d="M0.19999999999999973 9.4V14.2Q0.19999999999999973 15.899999999999999 3.9 15.899999999999999Q7.6 15.899999999999999 7.6 14.2V9.4Q7.6 7.6 3.9 7.6Q0.19999999999999973 7.6 0.19999999999999973 9.4Z" fill="#eeeeee" stroke="#033658" stroke-width="0.8"/><rect x="1.1" y="10.9" width="5.6" height="0.9" fill="#6f889a"/><path d="M8.600000000000001 9.4V14.2Q8.600000000000001 15.899999999999999 12.3 15.899999999999999Q16.0 15.899999999999999 16.0 14.2V9.4Q16.0 7.6 12.3 7.6Q8.600000000000001 7.6 8.600000000000001 9.4Z" fill="#eeeeee" stroke="#033658" stroke-width="0.8"/><rect x="9.5" y="10.9" width="5.6" height="0.9" fill="#6f889a"/></svg>
<div class="t" style="left:116px;top:489px;font-size:10.85px;line-height:16px;color:#f2f2f2;">ASM: 120 310-3-1909 10</div>
<svg style="left:63px;top:509px" width="7" height="10" viewBox="0 0 7 10"><path d="M0.5 0.5L5.8 4.75L0.5 9Z" fill="#e8e8e8" stroke="#f8f8f8" stroke-width="1"/></svg>
<div class="t" style="left:79px;top:505px;font-size:10.85px;line-height:16px;color:#f2f2f2;font-weight:bold;">Operations</div>
<div class="t" style="left:79px;top:521px;font-size:10.85px;line-height:16px;color:#f2f2f2;font-weight:bold;">Materials</div>
<svg style="left:44px;top:541px" width="7" height="10" viewBox="0 0 7 10"><path d="M0.5 0.5L5.8 4.75L0.5 9Z" fill="#e8e8e8" stroke="#f8f8f8" stroke-width="1"/></svg>
<svg style="left:57px;top:537px" width="16" height="16" viewBox="0 0 16 16"><path d="M4.2 2.5V7.300000000000001Q4.2 9.0 7.9 9.0Q11.600000000000001 9.0 11.600000000000001 7.300000000000001V2.5Q11.600000000000001 0.7 7.9 0.7Q4.2 0.7 4.2 2.5Z" fill="#eeeeee" stroke="#033658" stroke-width="0.8"/><rect x="5.1000000000000005" y="4.0" width="5.6" height="0.9" fill="#6f889a"/><path d="M0.19999999999999973 9.4V14.2Q0.19999999999999973 15.899999999999999 3.9 15.899999999999999Q7.6 15.899999999999999 7.6 14.2V9.4Q7.6 7.6 3.9 7.6Q0.19999999999999973 7.6 0.19999999999999973 9.4Z" fill="#eeeeee" stroke="#033658" stroke-width="0.8"/><rect x="1.1" y="10.9" width="5.6" height="0.9" fill="#6f889a"/><path d="M8.600000000000001 9.4V14.2Q8.600000000000001 15.899999999999999 12.3 15.899999999999999Q16.0 15.899999999999999 16.0 14.2V9.4Q16.0 7.6 12.3 7.6Q8.600000000000001 7.6 8.600000000000001 9.4Z" fill="#eeeeee" stroke="#033658" stroke-width="0.8"/><rect x="9.5" y="10.9" width="5.6" height="0.9" fill="#6f889a"/></svg>
<div class="t" style="left:78px;top:537px;font-size:10.85px;line-height:16px;color:#f2f2f2;">ASM: 17 310-3-0887 180</div>
<svg style="left:44px;top:557px" width="7" height="10" viewBox="0 0 7 10"><path d="M0.5 0.5L5.8 4.75L0.5 9Z" fill="#e8e8e8" stroke="#f8f8f8" stroke-width="1"/></svg>
<svg style="left:57px;top:553px" width="16" height="16" viewBox="0 0 16 16"><path d="M4.2 2.5V7.300000000000001Q4.2 9.0 7.9 9.0Q11.600000000000001 9.0 11.600000000000001 7.300000000000001V2.5Q11.600000000000001 0.7 7.9 0.7Q4.2 0.7 4.2 2.5Z" fill="#eeeeee" stroke="#033658" stroke-width="0.8"/><rect x="5.1000000000000005" y="4.0" width="5.6" height="0.9" fill="#6f889a"/><path d="M0.19999999999999973 9.4V14.2Q0.19999999999999973 15.899999999999999 3.9 15.899999999999999Q7.6 15.899999999999999 7.6 14.2V9.4Q7.6 7.6 3.9 7.6Q0.19999999999999973 7.6 0.19999999999999973 9.4Z" fill="#eeeeee" stroke="#033658" stroke-width="0.8"/><rect x="1.1" y="10.9" width="5.6" height="0.9" fill="#6f889a"/><path d="M8.600000000000001 9.4V14.2Q8.600000000000001 15.899999999999999 12.3 15.899999999999999Q16.0 15.899999999999999 16.0 14.2V9.4Q16.0 7.6 12.3 7.6Q8.600000000000001 7.6 8.600000000000001 9.4Z" fill="#eeeeee" stroke="#033658" stroke-width="0.8"/><rect x="9.5" y="10.9" width="5.6" height="0.9" fill="#6f889a"/></svg>
<div class="t" style="left:78px;top:553px;font-size:10.85px;line-height:16px;color:#f2f2f2;">ASM: 18 310-3-1499 180</div>
<svg style="left:44px;top:573px" width="7" height="10" viewBox="0 0 7 10"><path d="M0.5 0.5L5.8 4.75L0.5 9Z" fill="#e8e8e8" stroke="#f8f8f8" stroke-width="1"/></svg>
<svg style="left:57px;top:569px" width="16" height="16" viewBox="0 0 16 16"><path d="M4.2 2.5V7.300000000000001Q4.2 9.0 7.9 9.0Q11.600000000000001 9.0 11.600000000000001 7.300000000000001V2.5Q11.600000000000001 0.7 7.9 0.7Q4.2 0.7 4.2 2.5Z" fill="#eeeeee" stroke="#033658" stroke-width="0.8"/><rect x="5.1000000000000005" y="4.0" width="5.6" height="0.9" fill="#6f889a"/><path d="M0.19999999999999973 9.4V14.2Q0.19999999999999973 15.899999999999999 3.9 15.899999999999999Q7.6 15.899999999999999 7.6 14.2V9.4Q7.6 7.6 3.9 7.6Q0.19999999999999973 7.6 0.19999999999999973 9.4Z" fill="#eeeeee" stroke="#033658" stroke-width="0.8"/><rect x="1.1" y="10.9" width="5.6" height="0.9" fill="#6f889a"/><path d="M8.600000000000001 9.4V14.2Q8.600000000000001 15.899999999999999 12.3 15.899999999999999Q16.0 15.899999999999999 16.0 14.2V9.4Q16.0 7.6 12.3 7.6Q8.600000000000001 7.6 8.600000000000001 9.4Z" fill="#eeeeee" stroke="#033658" stroke-width="0.8"/><rect x="9.5" y="10.9" width="5.6" height="0.9" fill="#6f889a"/></svg>
<div class="t" style="left:78px;top:569px;font-size:10.85px;line-height:16px;color:#f2f2f2;">ASM: 19 310-3-1908 180</div>
<svg style="left:44px;top:589px" width="7" height="10" viewBox="0 0 7 10"><path d="M0.5 0.5L5.8 4.75L0.5 9Z" fill="#e8e8e8" stroke="#f8f8f8" stroke-width="1"/></svg>
<svg style="left:57px;top:585px" width="16" height="16" viewBox="0 0 16 16"><path d="M4.2 2.5V7.300000000000001Q4.2 9.0 7.9 9.0Q11.600000000000001 9.0 11.600000000000001 7.300000000000001V2.5Q11.600000000000001 0.7 7.9 0.7Q4.2 0.7 4.2 2.5Z" fill="#eeeeee" stroke="#033658" stroke-width="0.8"/><rect x="5.1000000000000005" y="4.0" width="5.6" height="0.9" fill="#6f889a"/><path d="M0.19999999999999973 9.4V14.2Q0.19999999999999973 15.899999999999999 3.9 15.899999999999999Q7.6 15.899999999999999 7.6 14.2V9.4Q7.6 7.6 3.9 7.6Q0.19999999999999973 7.6 0.19999999999999973 9.4Z" fill="#eeeeee" stroke="#033658" stroke-width="0.8"/><rect x="1.1" y="10.9" width="5.6" height="0.9" fill="#6f889a"/><path d="M8.600000000000001 9.4V14.2Q8.600000000000001 15.899999999999999 12.3 15.899999999999999Q16.0 15.899999999999999 16.0 14.2V9.4Q16.0 7.6 12.3 7.6Q8.600000000000001 7.6 8.600000000000001 9.4Z" fill="#eeeeee" stroke="#033658" stroke-width="0.8"/><rect x="9.5" y="10.9" width="5.6" height="0.9" fill="#6f889a"/></svg>
<div class="t" style="left:78px;top:585px;font-size:10.85px;line-height:16px;color:#f2f2f2;">ASM: 20 310-3-1912 180</div>
<svg style="left:25px;top:605px" width="7" height="10" viewBox="0 0 7 10"><path d="M0.5 0.5L5.8 4.75L0.5 9Z" fill="#e8e8e8" stroke="#f8f8f8" stroke-width="1"/></svg>
<div class="t" style="left:40px;top:601px;font-size:10.85px;line-height:16px;color:#f2f2f2;font-weight:bold;">Operations</div>
<svg style="left:25px;top:621px" width="7" height="10" viewBox="0 0 7 10"><path d="M0.5 0.5L5.8 4.75L0.5 9Z" fill="#e8e8e8" stroke="#f8f8f8" stroke-width="1"/></svg>
<div class="t" style="left:40px;top:617px;font-size:10.85px;line-height:16px;color:#f2f2f2;font-weight:bold;">Materials</div>
<svg style="left:272px;top:442px" width="13" height="21" viewBox="0 0 13 21"><path d="M0.5 0.5V16.8L4.2 13.2L7 20L9.8 18.9L7.2 12.2H11.8Z" fill="#fff" stroke="#000" stroke-width="1"/></svg>
<div style="left:306px;top:4px;width:705px;height:18px;background:#2189ba"></div>
<div style="left:306px;top:22px;width:705px;height:2px;background:#fff"></div>
<div class="t" style="left:308px;top:4px;font-size:11.5px;line-height:18px;color:#fff;">Job Entry</div>
<svg style="left:1002px;top:9px" width="8" height="10" viewBox="0 0 8 10"><path d="M1 0H6V5H4.2V1.1H2.3V5H1Z" fill="#f4ecea"/><rect x="0" y="4.9" width="7" height="1.2" fill="#f4ecea"/><rect x="3" y="6" width="1.1" height="3" fill="#f4ecea"/></svg>
<div style="left:306px;top:24px;width:705px;height:24px;background:#29a8e0"></div>
<div style="left:306px;top:48px;width:705px;height:2px;background:#fff"></div>
<div style="left:306px;top:50px;width:705px;height:24px;background:#29a8e0"></div>
<div style="left:306px;top:74px;width:705px;height:2px;background:#fff"></div>
<div style="left:306px;top:76px;width:705px;height:24px;background:#29a8e0"></div>
<div class="t" style="left:314px;top:30px;font-size:11.5px;line-height:16px;color:#fff;">Job</div>
<div class="t" style="left:346px;top:30px;font-size:11.5px;line-height:16px;color:#fff;">Project</div>
<div style="left:390px;top:25px;width:67px;height:23px;background:#033658;border:1px solid #e8eef2;border-bottom:none;border-radius:4px 4px 0 0;box-sizing:border-box"></div>
<div class="t" style="left:395px;top:28px;font-size:11.5px;line-height:16px;color:#fff;">Job Details</div>
<div class="t" style="left:464px;top:30px;font-size:11.5px;line-height:16px;color:#fff;">Engineering</div>
<div class="t" style="left:541px;top:30px;font-size:11.5px;line-height:16px;color:#fff;">Machine MES</div>
<div class="t" style="left:314px;top:56px;font-size:11.5px;line-height:16px;color:#fff;">Materials</div>
<div class="t" style="left:373px;top:56px;font-size:11.5px;line-height:16px;color:#fff;">Operations</div>
<div style="left:439px;top:51px;width:68px;height:23px;background:#033658;border:1px solid #e8eef2;border-bottom:none;border-radius:4px 4px 0 0;box-sizing:border-box"></div>
<div class="t" style="left:444px;top:54px;font-size:11.5px;line-height:16px;color:#fff;">Assemblies</div>
<div style="left:309px;top:77px;width:60px;height:23px;background:#033658;border:1px solid #e8eef2;border-bottom:none;border-radius:4px 4px 0 0;box-sizing:border-box"></div>
<div class="t" style="left:314px;top:80px;font-size:11.5px;line-height:16px;color:#fff;">Assembly</div>
<div class="t" style="left:377px;top:82px;font-size:11.5px;line-height:16px;color:#fff;">Comments</div>
<div class="t" style="left:447px;top:82px;font-size:11.5px;line-height:16px;color:#fff;">Subassemblies</div>
<div class="t" style="left:537px;top:82px;font-size:11.5px;line-height:16px;color:#fff;">RoHS</div>
<div class="t" style="left:581px;top:82px;font-size:11.5px;line-height:16px;color:#fff;">Reference Designators</div>
<div class="t" style="left:710px;top:82px;font-size:11.5px;line-height:16px;color:#fff;">Inspection</div>
<div style="left:306px;top:100px;width:705px;height:564px;background:#f2f2f4"></div>
<div style="left:313px;top:109px;width:532px;height:98px;background:#e8e8e8;border-radius:4px;"></div>
<div class="t" style="left:320px;top:107.5px;font-size:11px;line-height:16px;color:#000;font-weight:bold;">Parent Assembly</div>
<div class="t" style="left:31px;top:129px;font-size:12px;line-height:16px;color:#000;width:400px;text-align:right;">Parent:</div>
<div style="left:438px;top:126px;width:36px;height:19px;background:#fff;border:1px solid #a3a3a3;box-sizing:border-box"></div>
<div class="t" style="left:438px;top:127.5px;font-size:11px;line-height:16px;color:#000;width:32px;text-align:right;">16</div>
<div style="left:480px;top:126px;width:150px;height:19px;background:#c2c2c2;border:1px solid #a6a6a6;box-sizing:border-box"></div>
<svg style="left:619px;top:126px" width="11" height="11"><path d="M0 0H10V10Z" fill="#b0c4de"/></svg>
<div class="t" style="left:485px;top:127.5px;font-size:11px;line-height:16px;color:#000;">310-2-1123</div>
<div style="left:636px;top:126px;width:54px;height:19px;background:#c2c2c2;border:1px solid #a6a6a6;box-sizing:border-box"></div>
<svg style="left:679px;top:126px" width="11" height="11"><path d="M0 0H10V10Z" fill="#b0c4de"/></svg>
<div class="t" style="left:641px;top:127.5px;font-size:11px;line-height:16px;color:#000;">A</div>
<div style="left:697px;top:127px;width:88px;height:19px;border-right:1px solid #a0a0a0;border-bottom:1px solid #a0a0a0;box-sizing:border-box"></div>
<div class="t" style="left:697px;top:128px;font-size:11.5px;line-height:16px;color:#000;font-weight:bold;width:88px;text-align:center;">Template</div>
<div style="left:792px;top:128px;width:13px;height:13px;background:#fff;border:1px solid #333;box-sizing:border-box"></div>
<div style="left:324px;top:148px;width:108px;height:23px;background:#033658;border-top:1px solid #f4f4f4;box-sizing:border-box"></div>
<div class="t" style="left:324px;top:151.5px;font-size:11.5px;line-height:16px;color:#e8e8e8;width:108px;text-align:center;">Description</div>
<div style="left:438px;top:150px;width:252px;height:20px;background:#c2c2c2;border:1px solid #a6a6a6;box-sizing:border-box;overflow:hidden"><div class="t" style="left:5px;top:0px;font-size:11px;line-height:14px;color:#000">WLD - CHAIN GUARD CU 27.5 X 11.5 - RH<br>DRIVE</div></div>
<svg style="left:679px;top:150px" width="11" height="11"><path d="M0 0H10V10Z" fill="#b0c4de"/></svg>
<div class="t" style="left:384px;top:153px;font-size:12px;line-height:16px;color:#000;width:400px;text-align:right;">Call:</div>
<div style="left:792px;top:150px;width:48px;height:20px;background:#c2c2c2;border:1px solid #a6a6a6;box-sizing:border-box"></div>
<svg style="left:829px;top:150px" width="11" height="11"><path d="M0 0H10V10Z" fill="#b0c4de"/></svg>
<div class="t" style="left:797px;top:152.0px;font-size:11px;line-height:16px;color:#000;">0</div>
<div style="left:324px;top:172px;width:108px;height:23px;background:#033658;border-top:1px solid #f4f4f4;box-sizing:border-box"></div>
<div class="t" style="left:324px;top:175.5px;font-size:11.5px;line-height:16px;color:#e8e8e8;width:108px;text-align:center;">Rel Opr...</div>
<div style="left:438px;top:174px;width:36px;height:20px;background:#fff;border:1px solid #a3a3a3;box-sizing:border-box"></div>
<div class="t" style="left:438px;top:176.0px;font-size:11px;line-height:16px;color:#000;width:32px;text-align:right;">10</div>
<div style="left:480px;top:174px;width:210px;height:20px;background:#c2c2c2;border:1px solid #a6a6a6;box-sizing:border-box"></div>
<div class="t" style="left:485px;top:176.0px;font-size:11.6px;line-height:16px;color:#000;">Weld-Non Certifed</div>
<div class="t" style="left:384px;top:177px;font-size:12px;line-height:16px;color:#000;width:400px;text-align:right;">Line:</div>
<div style="left:792px;top:174px;width:48px;height:20px;background:#c2c2c2;border:1px solid #a6a6a6;box-sizing:border-box"></div>
<div class="t" style="left:797px;top:176.0px;font-size:11px;line-height:16px;color:#000;">0</div>
<div style="left:853px;top:109px;width:170px;height:98px;background:#e8e8e8;border-radius:4px;"></div>
<div class="t" style="left:857px;top:107.5px;font-size:11px;line-height:16px;color:#000;font-weight:bold;">Planning Contract</div>
<div class="t" style="left:581px;top:137px;font-size:12px;line-height:16px;color:#000;width:400px;text-align:right;">Link to Contract:</div>
<div style="left:987px;top:138px;width:13px;height:13px;background:#fff;border:1px solid #333;box-sizing:border-box"></div>
<div class="t" style="left:581px;top:159px;font-size:12px;line-height:16px;color:#000;width:400px;text-align:right;">Contract ID:</div>
<div style="left:987px;top:157px;width:40px;height:20px;background:#c2c2c2;border:1px solid #a6a6a6;box-sizing:border-box"></div>
<div style="left:313px;top:215px;width:710px;height:114px;background:#e8e8e8;border-radius:4px;"></div>
<div class="t" style="left:320px;top:213.5px;font-size:11px;line-height:16px;color:#000;font-weight:bold;">Part Information</div>
<div style="left:324px;top:230px;width:108px;height:23px;background:#033658;border-top:1px solid #f4f4f4;box-sizing:border-box"></div>
<div class="t" style="left:324px;top:233.5px;font-size:11.5px;line-height:16px;color:#e8e8e8;width:108px;text-align:center;">Part...</div>
<div style="left:324px;top:254px;width:108px;height:23px;background:#033658;border-top:1px solid #f4f4f4;box-sizing:border-box"></div>
<div class="t" style="left:324px;top:257.5px;font-size:11.5px;line-height:16px;color:#e8e8e8;width:108px;text-align:center;">Description...</div>
<div style="left:438px;top:232px;width:198px;height:20px;background:#fff;border:1px solid #a3a3a3;box-sizing:border-box"></div>
<svg style="left:625px;top:232px" width="11" height="11"><path d="M0 0H10V10Z" fill="#b0c4de"/></svg>
<div class="t" style="left:443px;top:234.0px;font-size:11px;line-height:16px;color:#000;">310-3-1911</div>
<div style="left:642px;top:232px;width:54px;height:20px;background:#fff;border:1px solid #a3a3a3;box-sizing:border-box"></div>
<div class="t" style="left:648px;top:234.0px;font-size:11px;line-height:16px;color:#000;">A</div>
<div style="left:678px;top:233px;width:17px;height:18px;background:#033658"></div>
<svg style="left:684px;top:241.0px" width="8" height="5"><path d="M0 0H6L3 3.2Z" fill="#fff"/></svg>
<div style="left:438px;top:256px;width:258px;height:20px;background:#fff;border:1px solid #a3a3a3;box-sizing:border-box;overflow:hidden"><div class="t" style="left:5px;top:0px;font-size:11px;line-height:14px;color:#000">SHT - CHAIN GUARD CU 27.5 X 11.5 - RH<br>DRIVE - 2</div></div>
<svg style="left:685px;top:256px" width="11" height="11"><path d="M0 0H10V10Z" fill="#b0c4de"/></svg>
<div class="t" style="left:384px;top:235px;font-size:12px;line-height:16px;color:#000;width:400px;text-align:right;">UOM:</div>
<div style="left:792px;top:232px;width:90px;height:20px;background:#c2c2c2;border:1px solid #a6a6a6;box-sizing:border-box"></div>
<div class="t" style="left:798px;top:234.0px;font-size:11px;line-height:16px;color:#000;">EA</div>
<div style="left:864px;top:233px;width:17px;height:18px;background:#033658"></div>
<svg style="left:870px;top:241.0px" width="8" height="5"><path d="M0 0H6L3 3.2Z" fill="#fff"/></svg>
<div class="t" style="left:384px;top:259px;font-size:12px;line-height:16px;color:#000;width:400px;text-align:right;">Drawing:</div>
<div style="left:792px;top:256px;width:90px;height:20px;background:#fff;border:1px solid #a3a3a3;box-sizing:border-box"></div>
<div class="t" style="left:384px;top:282px;font-size:12px;line-height:16px;color:#000;width:400px;text-align:right;">Require Ref Designators:</div>
<div style="left:792px;top:280px;width:90px;height:20px;background:#fff;border:1px solid #a3a3a3;box-sizing:border-box"></div>
<div class="t" style="left:797px;top:282.0px;font-size:11px;line-height:16px;color:#000;">1</div>
<div class="t" style="left:384px;top:307px;font-size:12.3px;line-height:16px;color:#000;width:400px;text-align:right;">Reassign Serial Number to Assembly:</div>
<div style="left:792px;top:309px;width:13px;height:13px;background:#eeeeee;border:1px solid #c8c8c8;box-sizing:border-box"></div>
<div class="t" style="left:932px;top:283px;font-size:12.2px;line-height:16px;color:#111;">Validate Ref D</div>
<div style="left:313px;top:337px;width:710px;height:249px;background:#e8e8e8;border-radius:4px;"></div>
<div class="t" style="left:320px;top:335.5px;font-size:11px;line-height:16px;color:#000;font-weight:bold;">Quantities</div>
<div class="t" style="left:33px;top:358px;font-size:12px;line-height:16px;color:#000;width:400px;text-align:right;">Qty/Parent:</div>
<div style="left:438px;top:354px;width:104px;height:19px;background:#fff;border:1px solid #a3a3a3;box-sizing:border-box"></div>
<div class="t" style="left:438px;top:355.5px;font-size:11px;line-height:16px;color:#000;width:100px;text-align:right;">1.00000000</div>
<div style="left:546px;top:354px;width:57px;height:21px;background:#c2c2c2;border:1px solid #a6a6a6;box-sizing:border-box"></div>
<div class="t" style="left:551px;top:356.5px;font-size:11px;line-height:16px;color:#000;">EA</div>
<div class="t" style="left:33px;top:383px;font-size:12px;line-height:16px;color:#000;width:400px;text-align:right;">Overrun Qty:</div>
<div style="left:438px;top:379px;width:104px;height:19px;background:#fff;border:1px solid #a3a3a3;box-sizing:border-box"></div>
<div class="t" style="left:438px;top:380.5px;font-size:11px;line-height:16px;color:#000;width:100px;text-align:right;">0</div>
<div style="left:546px;top:379px;width:57px;height:21px;background:#c2c2c2;border:1px solid #a6a6a6;box-sizing:border-box"></div>
<div class="t" style="left:551px;top:381.5px;font-size:11px;line-height:16px;color:#000;">EA</div>
<div class="t" style="left:33px;top:408px;font-size:12px;line-height:16px;color:#000;width:400px;text-align:right;">Required Qty:</div>
<div style="left:438px;top:404px;width:104px;height:19px;background:#c2c2c2;border:1px solid #a6a6a6;box-sizing:border-box"></div>
<div class="t" style="left:438px;top:405.5px;font-size:11px;line-height:16px;color:#000;width:100px;text-align:right;">0</div>
<div style="left:546px;top:404px;width:57px;height:21px;background:#c2c2c2;border:1px solid #a6a6a6;box-sizing:border-box"></div>
<div class="t" style="left:551px;top:406.5px;font-size:11px;line-height:16px;color:#000;">EA</div>
<div class="t" style="left:33px;top:457px;font-size:12px;line-height:16px;color:#000;width:400px;text-align:right;">Pull Qty:</div>
<div style="left:438px;top:453px;width:104px;height:19px;background:#fff;border:1px solid #a3a3a3;box-sizing:border-box"></div>
<div class="t" style="left:438px;top:454.5px;font-size:11px;line-height:16px;color:#000;width:100px;text-align:right;">0</div>
<div style="left:546px;top:453px;width:57px;height:21px;background:#c2c2c2;border:1px solid #a6a6a6;box-sizing:border-box"></div>
<div class="t" style="left:551px;top:455.5px;font-size:11px;line-height:16px;color:#000;">EA</div>
<div class="t" style="left:33px;top:481px;font-size:12px;line-height:16px;color:#000;width:400px;text-align:right;">Unit Cost:</div>
<div style="left:438px;top:478px;width:104px;height:19px;background:#c2c2c2;border:1px solid #a6a6a6;box-sizing:border-box"></div>
<div class="t" style="left:438px;top:479.5px;font-size:11px;line-height:16px;color:#000;width:100px;text-align:right;">0.00000</div>
<div class="t" style="left:363px;top:357px;font-size:12px;line-height:16px;color:#000;width:400px;text-align:right;">Analysis Code:</div>
<div style="left:768px;top:354px;width:240px;height:20px;background:#fff;border:1px solid #a3a3a3;box-sizing:border-box"></div>
<div style="left:990px;top:355px;width:17px;height:18px;background:#033658"></div>
<svg style="left:996px;top:363.0px" width="8" height="5"><path d="M0 0H6L3 3.2Z" fill="#fff"/></svg>
<div class="t" style="left:363px;top:382px;font-size:12px;line-height:16px;color:#000;width:400px;text-align:right;">Site:</div>
<div style="left:768px;top:380px;width:240px;height:20px;background:#fff;border:1px solid #a3a3a3;box-sizing:border-box"></div>
<div class="t" style="left:774px;top:382.0px;font-size:11.6px;line-height:16px;color:#000;">RAPAT Corporation -PILOT -Main Site</div>
<div style="left:990px;top:381px;width:17px;height:18px;background:#033658"></div>
<svg style="left:996px;top:389.0px" width="8" height="5"><path d="M0 0H6L3 3.2Z" fill="#fff"/></svg>
<div class="t" style="left:363px;top:409px;font-size:12px;line-height:16px;color:#000;width:400px;text-align:right;">Make Direct:</div>
<div style="left:768px;top:408px;width:13px;height:13px;background:#fff;border:1px solid #333;box-sizing:border-box"></div>
<div class="t" style="left:363px;top:433px;font-size:12px;line-height:16px;color:#000;width:400px;text-align:right;">Warehouse:</div>
<div style="left:768px;top:428px;width:240px;height:20px;background:#fff;border:1px solid #a3a3a3;box-sizing:border-box"></div>
<div class="t" style="left:774px;top:430.0px;font-size:11px;line-height:16px;color:#000;">GENERAL WAREHOUSE</div>
<div style="left:990px;top:429px;width:17px;height:18px;background:#033658"></div>
<svg style="left:996px;top:437.0px" width="8" height="5"><path d="M0 0H6L3 3.2Z" fill="#fff"/></svg>
<div class="t" style="left:363px;top:456px;font-size:12px;line-height:16px;color:#000;width:400px;text-align:right;">Available:</div>
<div style="left:768px;top:453px;width:78px;height:20px;background:#c2c2c2;border:1px solid #a6a6a6;box-sizing:border-box"></div>
<div class="t" style="left:768px;top:455.0px;font-size:11px;line-height:16px;color:#000;width:74px;text-align:right;">0</div>
<div style="left:849px;top:453px;width:57px;height:21px;background:#c2c2c2;border:1px solid #a6a6a6;box-sizing:border-box"></div>
<div class="t" style="left:854px;top:455.5px;font-size:11px;line-height:16px;color:#000;">EA</div>
<div class="t" style="left:363px;top:483px;font-size:12px;line-height:16px;color:#000;width:400px;text-align:right;">Mtl Burden Rate:</div>
<div style="left:768px;top:477px;width:78px;height:20px;background:#fff;border:1px solid #a3a3a3;box-sizing:border-box"></div>
<div class="t" style="left:768px;top:479.0px;font-size:11px;line-height:16px;color:#000;width:74px;text-align:right;">0.00000</div>
<div class="t" style="left:552px;top:483px;font-size:12px;line-height:16px;color:#000;width:400px;text-align:right;">Unit Cost:</div>
<div style="left:960px;top:477px;width:60px;height:19px;background:#fff;border:1px solid #a3a3a3;box-sizing:border-box"></div>
<div style="left:318px;top:505px;width:705px;height:73px;background:#e8e8e8;border-radius:4px;border:1px solid #f4f4f4;box-sizing:border-box;"></div>
<div class="t" style="left:323px;top:503.5px;font-size:11px;line-height:16px;color:#000;font-weight:bold;">Unit Cost Breakdown</div>
<div class="t" style="left:33px;top:527px;font-size:12px;line-height:16px;color:#000;width:400px;text-align:right;">Material:</div>
<div style="left:438px;top:524px;width:117px;height:19px;background:#fff;border:1px solid #a3a3a3;box-sizing:border-box"></div>
<div class="t" style="left:438px;top:525.5px;font-size:11px;line-height:16px;color:#000;width:113px;text-align:right;">0.00000</div>
<div class="t" style="left:33px;top:552px;font-size:12px;line-height:16px;color:#000;width:400px;text-align:right;">Labor:</div>
<div style="left:438px;top:549px;width:117px;height:19px;background:#fff;border:1px solid #a3a3a3;box-sizing:border-box"></div>
<div class="t" style="left:438px;top:550.5px;font-size:11px;line-height:16px;color:#000;width:113px;text-align:right;">0.00000</div>
<div class="t" style="left:363px;top:527px;font-size:12px;line-height:16px;color:#000;width:400px;text-align:right;">Burden:</div>
<div style="left:768px;top:524px;width:117px;height:19px;background:#fff;border:1px solid #a3a3a3;box-sizing:border-box"></div>
<div class="t" style="left:768px;top:525.5px;font-size:11px;line-height:16px;color:#000;width:113px;text-align:right;">0.00000</div>
<div class="t" style="left:363px;top:552px;font-size:12px;line-height:16px;color:#000;width:400px;text-align:right;">Subcontract:</div>
<div style="left:768px;top:549px;width:117px;height:19px;background:#fff;border:1px solid #a3a3a3;box-sizing:border-box"></div>
<div class="t" style="left:768px;top:550.5px;font-size:11px;line-height:16px;color:#000;width:113px;text-align:right;">0.00000</div>
<svg style="left:330px;top:380px" width="320" height="80" viewBox="0 0 320 80"><defs><filter id="sh" x="-10%" y="-30%" width="120%" height="160%"><feGaussianBlur stdDeviation="1.3"/></filter></defs><ellipse cx="161" cy="40.5" rx="142" ry="25.5" fill="none" stroke="rgba(0,0,0,.35)" stroke-width="3.5" filter="url(#sh)"/><ellipse cx="159" cy="38" rx="142" ry="25.5" fill="none" stroke="#ec0a0a" stroke-width="3.2"/></svg>
</div></body></html>
